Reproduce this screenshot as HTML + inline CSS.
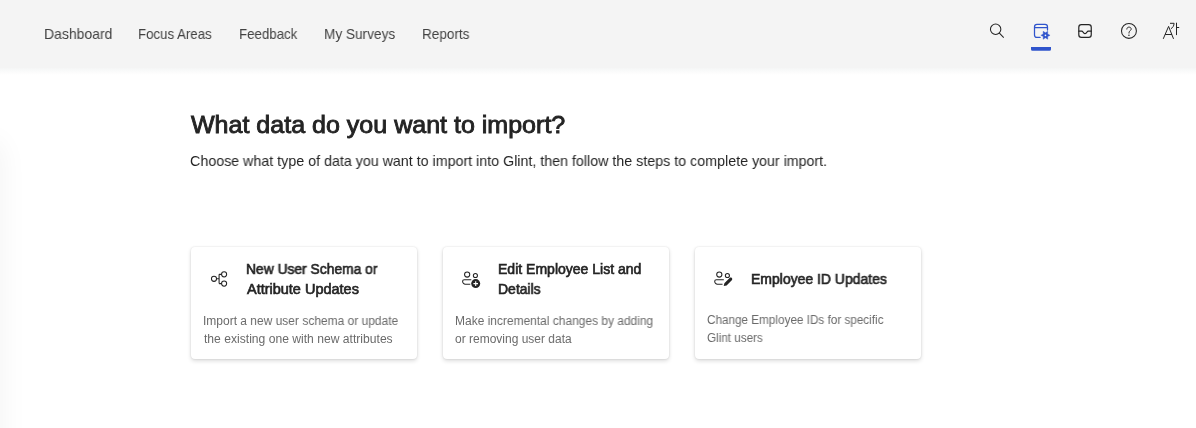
<!DOCTYPE html>
<html><head><meta charset="utf-8">
<style>
*{box-sizing:border-box;margin:0;padding:0}
html,body{width:1196px;height:428px;overflow:hidden;background:#fff;font-family:"Liberation Sans",sans-serif;color:#242424}
.hdr{position:absolute;left:0;top:0;width:1196px;height:67px;background:#f4f4f4}
.hsh{position:absolute;left:0;top:67px;width:1196px;height:8px;background:linear-gradient(180deg,#f3f3f3 0%,#f7f8f8 30%,#fcfcfc 70%,#fff 100%)}
.side{position:absolute;left:-30px;top:140px;width:30px;height:420px;border-radius:16px;box-shadow:2px 0 28px rgba(0,0,0,0.05)}
.tx{position:absolute;white-space:nowrap;line-height:30px;transform-origin:0 0;will-change:transform}
.card{position:absolute;top:247px;width:226px;height:112px;background:#fff;border-radius:4px;box-shadow:0 0 2px rgba(0,0,0,0.12),0 2px 4px rgba(0,0,0,0.14)}
svg{position:absolute;left:0;top:0}
</style></head><body>
<div class="hdr"></div>
<div class="hsh"></div>
<div class="side"></div>
<div class="card" style="left:191px"></div>
<div class="card" style="left:443px"></div>
<div class="card" style="left:695px"></div>
<div class="tx" style="left:44.44px;top:19.04px;font-size:14.6px;font-weight:400;color:#424242;transform:scaleX(0.9580)">Dashboard</div>
<div class="tx" style="left:138.39px;top:19.04px;font-size:14.6px;font-weight:400;color:#424242;transform:scaleX(0.9087)">Focus Areas</div>
<div class="tx" style="left:239.09px;top:19.04px;font-size:14.6px;font-weight:400;color:#424242;transform:scaleX(0.9095)">Feedback</div>
<div class="tx" style="left:324.17px;top:19.04px;font-size:14.6px;font-weight:400;color:#424242;transform:scaleX(0.9333)">My Surveys</div>
<div class="tx" style="left:422.47px;top:19.04px;font-size:14.6px;font-weight:400;color:#424242;transform:scaleX(0.9280)">Reports</div>
<div class="tx" style="left:191.40px;top:109.80px;font-size:23.1px;font-weight:400;-webkit-text-stroke:0.85px #242424;color:#242424;transform:scaleX(1.0838)">What data do you want to import?</div>
<div class="tx" style="left:190.01px;top:145.91px;font-size:14.4px;font-weight:400;color:#242424;transform:scaleX(0.9908)">Choose what type of data you want to import into Glint, then follow the steps to complete your import.</div>
<div class="tx" style="left:246.41px;top:253.95px;font-size:14.0px;font-weight:400;-webkit-text-stroke:0.62px #242424;color:#242424;transform:scaleX(0.9879)">New User Schema or</div>
<div class="tx" style="left:247.40px;top:274.05px;font-size:14.0px;font-weight:400;-webkit-text-stroke:0.62px #242424;color:#242424;transform:scaleX(1.0343)">Attribute Updates</div>
<div class="tx" style="left:498.40px;top:253.95px;font-size:14.0px;font-weight:400;-webkit-text-stroke:0.62px #242424;color:#242424;transform:scaleX(1.0014)">Edit Employee List and</div>
<div class="tx" style="left:498.40px;top:274.05px;font-size:14.0px;font-weight:400;-webkit-text-stroke:0.62px #242424;color:#242424;transform:scaleX(0.9952)">Details</div>
<div class="tx" style="left:750.50px;top:263.65px;font-size:14.0px;font-weight:400;-webkit-text-stroke:0.62px #242424;color:#242424;transform:scaleX(0.9970)">Employee ID Updates</div>
<div class="tx" style="left:203.10px;top:306.04px;font-size:12px;font-weight:400;color:#6a6a6a;transform:scaleX(0.9985)">Import a new user schema or update</div>
<div class="tx" style="left:204.10px;top:324.04px;font-size:12px;font-weight:400;color:#6a6a6a;transform:scaleX(1.0102)">the existing one with new attributes</div>
<div class="tx" style="left:455.10px;top:306.04px;font-size:12px;font-weight:400;color:#6a6a6a;transform:scaleX(0.9970)">Make incremental changes by adding</div>
<div class="tx" style="left:455.10px;top:324.04px;font-size:12px;font-weight:400;color:#6a6a6a;transform:scaleX(0.9991)">or removing user data</div>
<div class="tx" style="left:707.12px;top:305.14px;font-size:12px;font-weight:400;color:#6a6a6a;transform:scaleX(0.9765)">Change Employee IDs for specific</div>
<div class="tx" style="left:707.13px;top:323.04px;font-size:12px;font-weight:400;color:#6a6a6a;transform:scaleX(0.9732)">Glint users</div>
<svg width="1196" height="428" viewBox="0 0 1196 428" fill="none">
 <!-- search -->
 <g stroke="#242424" stroke-width="1.05" stroke-linecap="round">
  <circle cx="995.65" cy="29.3" r="5.2"/>
  <path d="M999.4 33.1 L1003.5 37.3"/>
 </g>
 <!-- settings window -->
 <g stroke="#2f54cc" stroke-width="1.25" stroke-linecap="round">
  <path d="M1040.1 37.45 H1037 A2.5 2.5 0 0 1 1034.5 34.95 V26.9 A2.5 2.5 0 0 1 1037 24.4 H1045 A2.5 2.5 0 0 1 1047.5 26.9 V30.1"/>
  <path d="M1034.6 27.6 H1047.4"/>
 </g>
 <path fill="#2f54cc" stroke="#2f54cc" stroke-width="0.4" stroke-linejoin="round" d="M1050.05 35.30 L1047.66 36.57 L1047.75 39.28 L1045.45 37.85 L1043.15 39.28 L1043.24 36.57 L1040.85 35.30 L1043.24 34.02 L1043.15 31.32 L1045.45 32.75 L1047.75 31.32 L1047.66 34.02 Z"/>
 <circle cx="1045.45" cy="35.3" r="0.85" fill="#f4f4f4"/>
 <path fill="#2f54cc" d="M1031 47 H1051 V49.3 A1.5 1.5 0 0 1 1049.5 50.8 H1032.5 A1.5 1.5 0 0 1 1031 49.3 Z"/>
 <!-- inbox -->
 <g stroke="#242424" stroke-width="1.2" stroke-linecap="round" stroke-linejoin="round">
  <rect x="1078.8" y="24.65" width="12.45" height="12.7" rx="2.6"/>
  <path d="M1078.8 31.2 H1081.6 C1082.3 31.2 1082.7 31.5 1083.1 32.1 L1083.9 33.1 C1084.3 33.6 1084.6 33.7 1085 33.7 C1085.4 33.7 1085.7 33.6 1086.1 33.1 L1086.9 32.1 C1087.3 31.5 1087.7 31.2 1088.4 31.2 H1091.2"/>
 </g>
 <!-- help -->
 <g stroke="#242424" stroke-width="1.05" stroke-linecap="round">
  <circle cx="1128.95" cy="30.9" r="7.45"/>
  <path stroke-width="0.95" d="M1126.8 29.1 C1126.8 27.9 1127.8 27.1 1129 27.1 C1130.2 27.1 1131.2 27.9 1131.2 29 C1131.2 30.2 1130.1 30.6 1129.5 31.3 C1129.1 31.8 1129 32.3 1129 33.1"/>
 </g>
 <circle cx="1128.95" cy="35.3" r="0.75" fill="#242424"/>
 <!-- A ga -->
 <g stroke="#242424" stroke-width="1.0" stroke-linecap="round" stroke-linejoin="round">
  <path d="M1163.4 38.5 L1168.6 26.4 L1173.4 38.5"/>
  <path d="M1165.5 34.5 H1171.6"/>
  <path d="M1170.4 23.3 H1174.1 C1173.9 25.8 1173 27.6 1171.3 28.5"/>
  <path d="M1176.5 23.1 V34.7"/>
  <path d="M1176.5 27.5 H1178.8"/>
 </g>
 <!-- card1 icon: nodes -->
 <g stroke="#242424" stroke-width="1.05">
  <circle cx="214" cy="278.8" r="2.55"/>
  <circle cx="224.1" cy="274.35" r="2.55"/>
  <circle cx="224.1" cy="283.6" r="2.55"/>
  <path d="M216.6 278.8 H219.1 M219.1 274.35 V283.6 M219.1 274.35 H221.5 M219.1 283.6 H221.5"/>
 </g>
 <!-- card2 icon: people add -->
 <g stroke="#242424" stroke-width="1.05">
  <circle cx="467.15" cy="274.5" r="2.6"/>
  <circle cx="475.4" cy="275.45" r="2.05"/>
  <path d="M471.3 279.7 H464.3 C463.2 279.7 462.6 280.3 462.6 281.2 C462.6 282.8 464.1 284.3 467 284.3 H470.3"/>
 </g>
 <circle cx="475.7" cy="283.6" r="4.5" fill="#242424"/>
 <path d="M475.7 281.3 V285.9 M473.4 283.6 H478" stroke="#fff" stroke-width="1.1"/>
 <!-- card3 icon: people edit -->
 <g stroke="#242424" stroke-width="1.05">
  <circle cx="719.3" cy="274.5" r="2.6"/>
  <circle cx="727.4" cy="275.45" r="2.05"/>
  <path d="M723.8 279.7 H716.4 C715.3 279.7 714.7 280.3 714.7 281.2 C714.7 282.8 716.2 284.3 719.1 284.3 H722.5"/>
 </g>
 <path d="M723.7 286 L724.4 283.2 L729.6 278 C730.2 277.4 731.2 277.4 731.8 278 C732.4 278.6 732.4 279.6 731.8 280.2 L726.6 285.4 Z" fill="#242424"/>
</svg>
</body></html>
